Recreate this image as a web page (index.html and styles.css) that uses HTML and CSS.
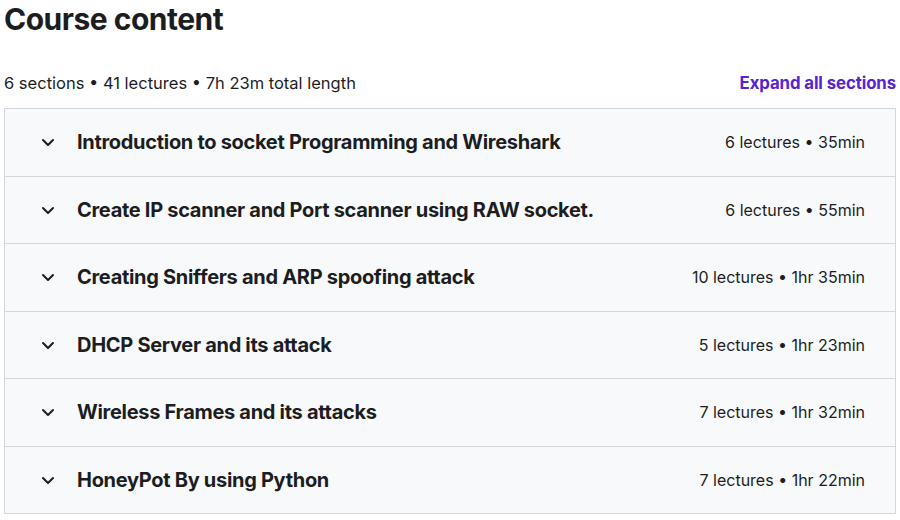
FILE: index.html
```html
<!DOCTYPE html>
<html lang="en">
<head>
    <meta charset="UTF-8">
    <meta name="viewport" content="width=device-width, initial-scale=1.0">
    <title>Course content</title>
    <link rel="stylesheet" href="styles.css">
</head>
<body>

    <div class="curriculum">
        <h2 class="heading">Course content</h2>

        <div class="summary">
            <span>6 sections • 41 lectures • 7h 23m total length</span>
            <button class="expand-btn">Expand all sections</button>
        </div>

        <!-- Sections list -->
        <div class="sections">
            <div class="section">
                <svg class="chevron" viewBox="0 0 16 16"><path d="M3 6l5 5 5-5"/></svg>
                <span class="section-title">Introduction to socket Programming and Wireshark</span>
                <span class="section-meta">6 lectures • 35min</span>
            </div>
            <div class="section">
                <svg class="chevron" viewBox="0 0 16 16"><path d="M3 6l5 5 5-5"/></svg>
                <span class="section-title">Create IP scanner and Port scanner using RAW socket.</span>
                <span class="section-meta">6 lectures • 55min</span>
            </div>
            <div class="section">
                <svg class="chevron" viewBox="0 0 16 16"><path d="M3 6l5 5 5-5"/></svg>
                <span class="section-title">Creating Sniffers and ARP spoofing attack</span>
                <span class="section-meta">10 lectures • 1hr 35min</span>
            </div>
            <div class="section">
                <svg class="chevron" viewBox="0 0 16 16"><path d="M3 6l5 5 5-5"/></svg>
                <span class="section-title">DHCP Server and its attack</span>
                <span class="section-meta">5 lectures • 1hr 23min</span>
            </div>
            <div class="section">
                <svg class="chevron" viewBox="0 0 16 16"><path d="M3 6l5 5 5-5"/></svg>
                <span class="section-title">Wireless Frames and its attacks</span>
                <span class="section-meta">7 lectures • 1hr 32min</span>
            </div>
            <div class="section">
                <svg class="chevron" viewBox="0 0 16 16"><path d="M3 6l5 5 5-5"/></svg>
                <span class="section-title">HoneyPot By using Python</span>
                <span class="section-meta">7 lectures • 1hr 22min</span>
            </div>
        </div>
    </div>

</body>
</html>
```

FILE: styles.css
```css
body {
    margin: 0;
    font-family: 'Inter', 'Liberation Sans', sans-serif;
    background-color: #fff;
    color: #1c1d1f;
}

.curriculum {
    padding: 0 4px;
}

.heading {
    font-size: 30px;
    font-weight: 700;
    letter-spacing: -0.5px;
    margin: 0;
    padding-top: 1px;
    line-height: 36px;
}

.summary {
    display: flex;
    justify-content: space-between;
    align-items: center;
    margin-top: 36px;
    margin-bottom: 15px;
    font-size: 16.5px;
}

.expand-btn {
    background: none;
    border: none;
    padding: 0;
    color: #5624d0;
    font-family: inherit;
    font-size: 16.8px;
    font-weight: 700;
    letter-spacing: -0.1px;
    cursor: pointer;
}

.sections {
    border: 1px solid #d1d7dc;
    border-bottom: none;
}

.section {
    display: flex;
    align-items: center;
    height: 66.5px;
    padding: 0 30px 0 35px;
    background-color: #f7f9fa;
    border-bottom: 1px solid #d1d7dc;
}

.chevron {
    width: 16px;
    height: 16px;
    fill: none;
    stroke: #1c1d1f;
    stroke-width: 2;
    stroke-linecap: round;
    stroke-linejoin: round;
    flex-shrink: 0;
}

.section-title {
    flex: 1;
    margin-left: 21px;
    font-size: 20px;
    font-weight: 700;
    letter-spacing: -0.3px;
}

.section-meta {
    font-size: 16px;
}
```
